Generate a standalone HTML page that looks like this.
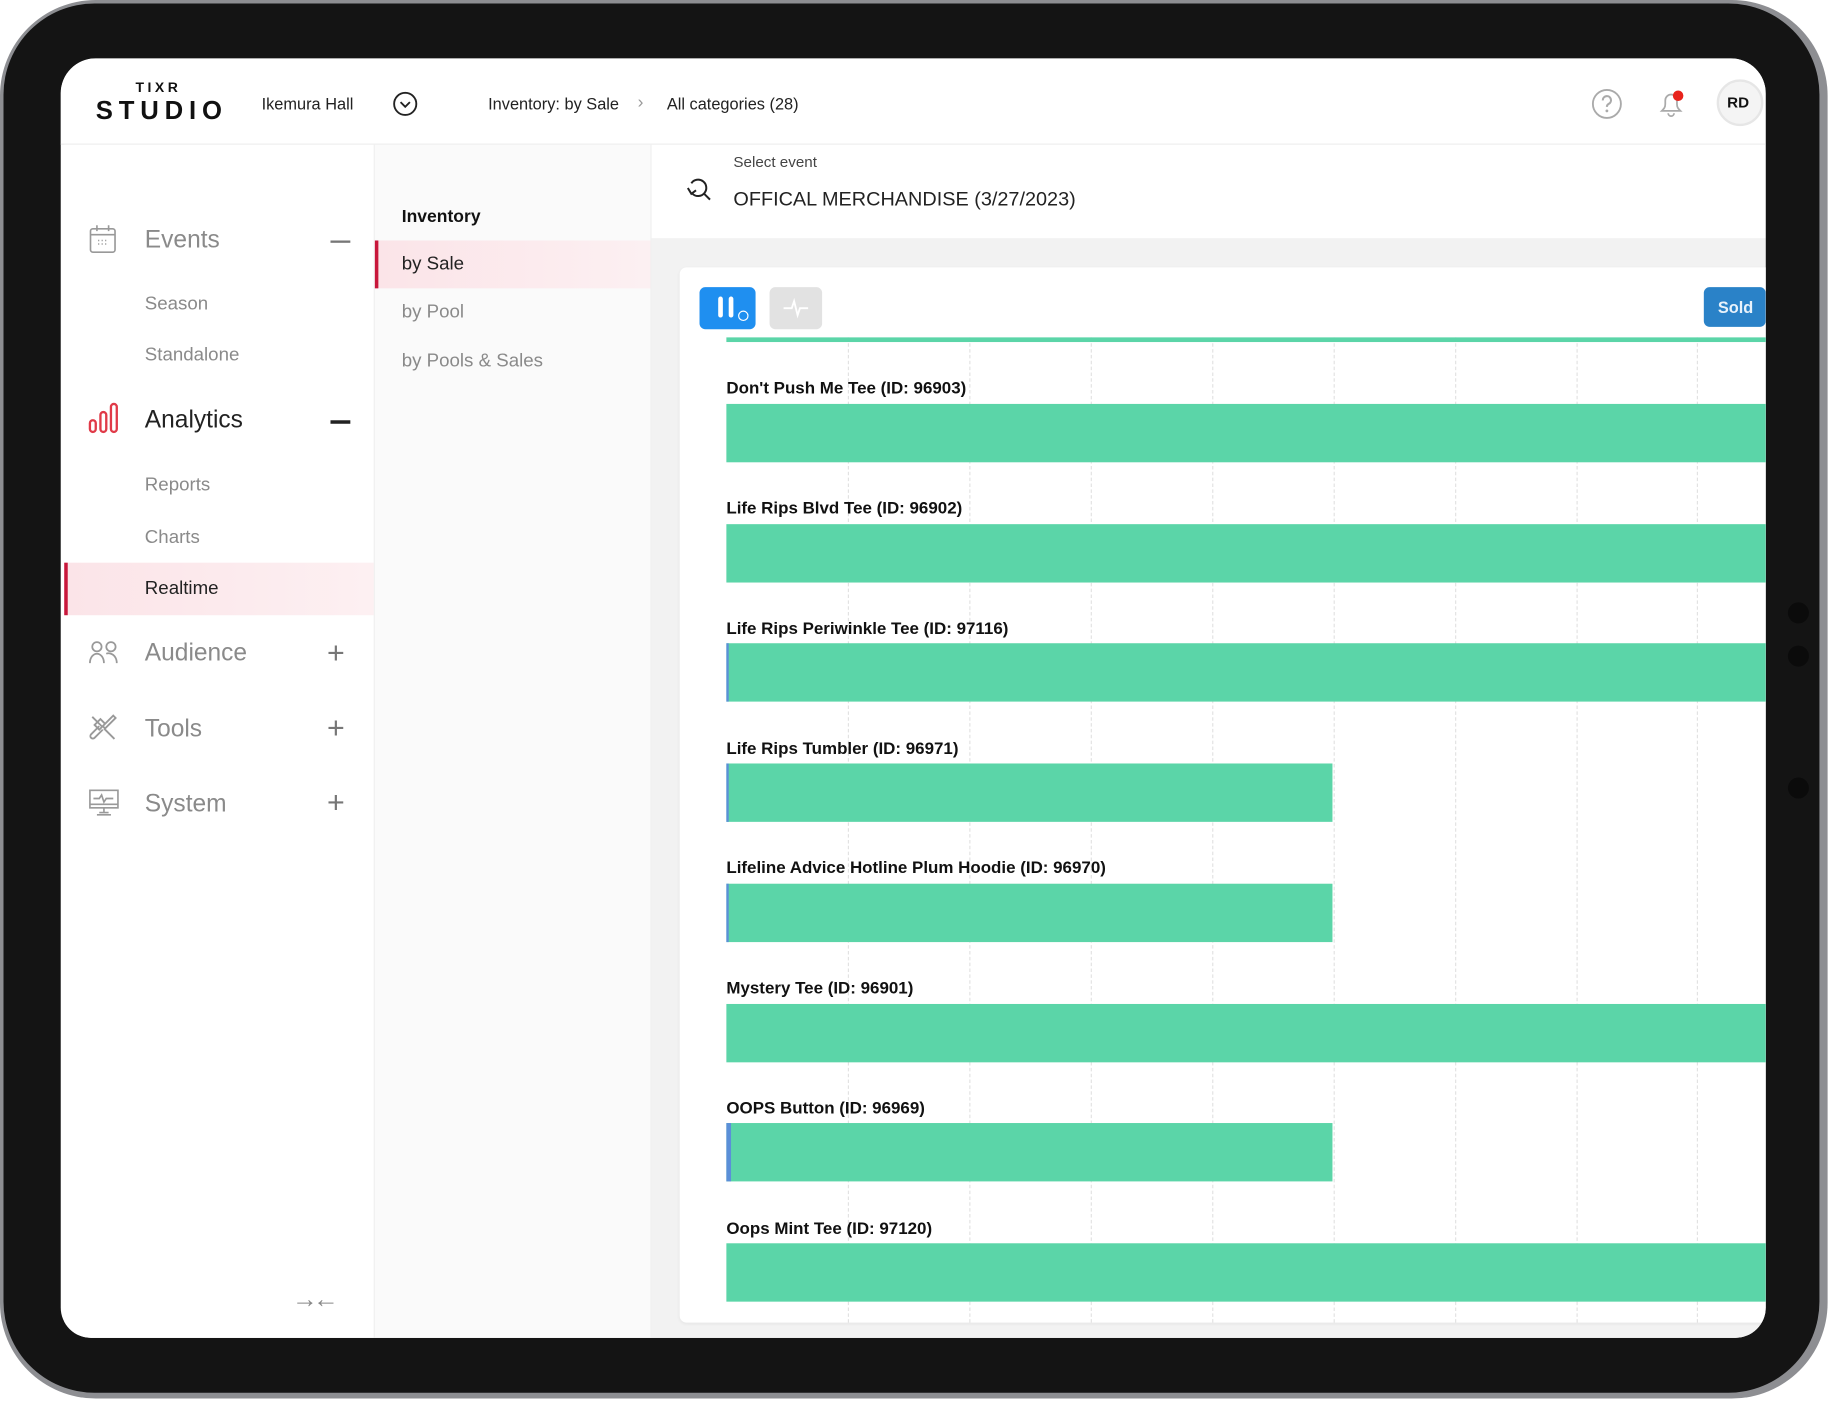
<!DOCTYPE html>
<html><head><meta charset="utf-8"><style>
html,body{margin:0;padding:0;width:1830px;height:1402px;overflow:hidden;background:#fff;font-family:"Liberation Sans",sans-serif}
#w{position:absolute;left:0;top:0;width:1567px;height:1201px;transform:scale(1.1678,1.1674);transform-origin:0 0}
.a{position:absolute}
.dev{left:0;top:0;width:1565px;height:1198px;border-radius:82px;background:#8d8e92}
.bez{left:3px;top:3px;width:1555px;height:1190px;border-radius:78px;background:#141414}
.scr{left:52px;top:50px;width:1460px;height:1096px;border-radius:30px 30px 26px 26px;background:#fff;overflow:hidden}
.t{position:absolute;white-space:nowrap}
.nav{font-size:21px;color:#8a8a8a}
.sub{font-size:16px;color:#8a8a8a}
.lbl{font-size:14.5px;font-weight:bold;color:#111;left:70px}
.bar{position:absolute;left:70px;height:50px;background:#5bd5a8}
.grid{position:absolute;top:60px;bottom:0;width:0;border-left:1px dashed #e2e2e2}
</style></head><body><div id="w">
<div class="a dev"></div><div class="a bez"></div>
<div class="a" style="left:1531px;top:516px;width:18px;height:18px;border-radius:9px;background:#0b0b0b"></div>
<div class="a" style="left:1531px;top:553px;width:18px;height:18px;border-radius:9px;background:#0b0b0b"></div>
<div class="a" style="left:1531px;top:666px;width:18px;height:18px;border-radius:9px;background:#0b0b0b"></div>
<div class="a scr">
 <!-- header -->
 <div class="a" style="left:0;top:0;width:1460px;height:73px;background:#fff;border-bottom:1px solid #ececec"></div>
 <div class="t" style="left:64px;top:18px;font-size:12px;letter-spacing:3px;font-weight:bold;color:#111">TIXR</div>
 <div class="t" style="left:30px;top:32px;font-size:22px;letter-spacing:5px;font-weight:bold;color:#111">STUDIO</div>
 <div class="t" style="left:172px;top:31px;font-size:14px;color:#222">Ikemura Hall</div>
 <svg class="a" style="left:284px;top:28px" width="22" height="22" viewBox="0 0 22 22"><circle cx="11" cy="11" r="9.5" fill="none" stroke="#222" stroke-width="1.6"/><path d="M7 9.5l4 4 4-4" fill="none" stroke="#222" stroke-width="1.6"/></svg>
 <div class="t" style="left:366px;top:31px;font-size:14px;color:#222">Inventory: by Sale</div>
 <div class="t" style="left:494px;top:29px;font-size:15px;color:#999">›</div>
 <div class="t" style="left:519px;top:31px;font-size:14px;color:#222">All categories (28)</div>
 <svg class="a" style="left:1310px;top:25px" width="28" height="28" viewBox="0 0 28 28"><circle cx="14" cy="14" r="12" fill="none" stroke="#aaa" stroke-width="1.6"/><path d="M10.5 11a3.5 3.5 0 1 1 5 3c-1 .6-1.5 1.2-1.5 2.5" fill="none" stroke="#aaa" stroke-width="1.8"/><circle cx="14" cy="20" r="1.2" fill="#aaa"/></svg>
 <svg class="a" style="left:1364px;top:25px" width="30" height="28" viewBox="0 0 30 28"><path d="M7 20h16c-2-2-3-3-3-6v-3a5 5 0 0 0-10 0v3c0 3-1 4-3 6z" fill="none" stroke="#aaa" stroke-width="1.5"/><path d="M12.5 22a2.5 2.5 0 0 0 5 0" fill="none" stroke="#aaa" stroke-width="1.5"/><circle cx="21" cy="7" r="4.5" fill="#e8231c"/></svg>
 <div class="a" style="left:1418px;top:18px;width:36px;height:36px;border-radius:50%;background:#f4f4f4;border:2px solid #e6e6e6"></div>
 <div class="t" style="left:1427px;top:30px;font-size:13px;font-weight:bold;color:#111">RD</div>

 <!-- left sidebar -->
 <div class="a" style="left:3px;top:74px;width:265px;height:1030px;background:#fff;border-right:1px solid #eee"></div>
 <svg class="a" style="left:24px;top:142px" width="24" height="26" viewBox="0 0 24 26"><rect x="1.5" y="4" width="21" height="20" rx="2" fill="none" stroke="#999" stroke-width="1.4"/><path d="M1.5 9h21M7 1v5M17 1v5" stroke="#999" stroke-width="1.4"/><path d="M8 14h1M11 14h1M14 14h1M8 17h1M11 17h1M14 17h1" stroke="#999" stroke-width="1.3"/></svg>
 <div class="t nav" style="left:72px;top:144px">Events</div>
 <div class="a" style="left:231px;top:156px;width:17px;height:2px;background:#777"></div>
 <div class="t sub" style="left:72px;top:202px">Season</div>
 <div class="t sub" style="left:72px;top:246px">Standalone</div>
 <svg class="a" style="left:23px;top:294px" width="28" height="28" viewBox="0 0 28 28"><g fill="none" stroke="#e03a48" stroke-width="2"><rect x="2" y="16" width="5" height="10" rx="2.5"/><rect x="11" y="9" width="5" height="17" rx="2.5"/><rect x="20" y="2" width="5" height="24" rx="2.5"/></g></svg>
 <div class="t" style="left:72px;top:298px;font-size:21px;color:#222">Analytics</div>
 <div class="a" style="left:231px;top:310px;width:17px;height:2.5px;background:#222"></div>
 <div class="t sub" style="left:72px;top:357px">Reports</div>
 <div class="t sub" style="left:72px;top:402px">Charts</div>
 <div class="a" style="left:3px;top:432px;width:265px;height:45px;background:linear-gradient(90deg,#fbe4e8,#fdf0f2)"></div>
 <div class="a" style="left:3px;top:432px;width:3px;height:45px;background:#c8173b"></div>
 <div class="t" style="left:72px;top:446px;font-size:16px;color:#222">Realtime</div>
 <svg class="a" style="left:24px;top:498px" width="28" height="22" viewBox="0 0 28 22"><g fill="none" stroke="#999" stroke-width="1.5"><circle cx="7" cy="6" r="4"/><circle cx="19" cy="6" r="4"/><path d="M1 20c0-5 3-8 6-8s6 3 6 8M15 12c1-.5 2.5-.5 4 0 3 1 5 4 5 8"/></g></svg>
 <div class="t nav" style="left:72px;top:498px">Audience</div>
 <div class="t" style="left:228px;top:494px;font-size:26px;color:#777">+</div>
 <svg class="a" style="left:24px;top:561px" width="26" height="26" viewBox="0 0 26 26"><g fill="none" stroke="#999" stroke-width="1.6"><path d="M3 3l8 8M5 10l5-5 4 4-5 5zM13 13l9 9M21 2l2 2-9 9-2-2zM12 14l-7 7a2 2 0 0 1-3-3l7-7"/></g></svg>
 <div class="t nav" style="left:72px;top:563px">Tools</div>
 <div class="t" style="left:228px;top:558px;font-size:26px;color:#777">+</div>
 <svg class="a" style="left:24px;top:626px" width="26" height="24" viewBox="0 0 26 24"><g fill="none" stroke="#999" stroke-width="1.4"><rect x="1" y="1" width="24" height="15"/><path d="M1 13h24M9 20h8M7 22h12M13 16v4M4 8h5l2-3 2 6 2-3h6"/></g></svg>
 <div class="t nav" style="left:72px;top:627px">System</div>
 <div class="t" style="left:228px;top:622px;font-size:26px;color:#777">+</div>
 <div class="t" style="left:198px;top:1050px;font-size:22px;color:#888;letter-spacing:-4px">→←</div>

 <!-- second column -->
 <div class="a" style="left:269px;top:74px;width:236px;height:1030px;background:#fafafa;border-right:1px solid #eee"></div>
 <div class="t" style="left:292px;top:127px;font-size:15px;font-weight:bold;color:#111">Inventory</div>
 <div class="a" style="left:269px;top:156px;width:236px;height:41px;background:linear-gradient(90deg,#fbe4e8,#fcf0f2)"></div>
 <div class="a" style="left:269px;top:156px;width:3px;height:41px;background:#c8173b"></div>
 <div class="t" style="left:292px;top:168px;font-size:16px;color:#222">by Sale</div>
 <div class="t" style="left:292px;top:209px;font-size:16px;color:#8a8a8a">by Pool</div>
 <div class="t" style="left:292px;top:251px;font-size:16px;color:#8a8a8a">by Pools &amp; Sales</div>

 <!-- main -->
 <div class="a" style="left:506px;top:74px;width:954px;height:80px;background:#fff"></div>
 <div class="a" style="left:506px;top:154px;width:954px;height:950px;background:#f2f2f2"></div>
 <svg class="a" style="left:536px;top:101px" width="22" height="22" viewBox="0 0 22 22"><g fill="none" stroke="#222" stroke-width="1.7"><path d="M4 6a7 7 0 1 1 1 9"/><path d="M1 10l3 5 4-3"/><path d="M15 15l5 5"/></g></svg>
 <div class="t" style="left:576px;top:81px;font-size:13px;color:#444">Select event</div>
 <div class="t" style="left:576px;top:111px;font-size:17px;color:#222">OFFICAL MERCHANDISE (3/27/2023)</div>

 <div class="a" style="left:530px;top:179px;width:940px;height:904px;background:#fff;border-radius:6px;box-shadow:0 1px 3px rgba(0,0,0,.06)">
  <div class="grid" style="left:144px"></div><div class="grid" style="left:248px"></div><div class="grid" style="left:352px"></div><div class="grid" style="left:456px"></div><div class="grid" style="left:560px"></div><div class="grid" style="left:664px"></div><div class="grid" style="left:768px"></div><div class="grid" style="left:871px"></div>
  <div class="a" style="left:17px;top:17px;width:48px;height:36px;border-radius:5px;background:#1f8ff0"></div>
  <div class="a" style="left:33px;top:25px;width:4px;height:18px;background:#fff;border-radius:2px"></div>
  <div class="a" style="left:42px;top:25px;width:4px;height:18px;background:#fff;border-radius:2px"></div>
  <div class="a" style="left:50px;top:37px;width:7px;height:7px;border:1.5px solid #fff;border-radius:50%"></div>
  <div class="a" style="left:77px;top:17px;width:45px;height:36px;border-radius:5px;background:#e2e2e2"></div>
  <svg class="a" style="left:88px;top:25px" width="24" height="20" viewBox="0 0 24 20"><path d="M1 10h7l2-6 3 12 2-6h7" fill="none" stroke="#fff" stroke-width="1.6"/></svg>
  <div class="a" style="left:877px;top:17px;width:53px;height:34px;border-radius:5px;background:#2a82c8"></div>
  <div class="t" style="left:889px;top:26px;font-size:14px;font-weight:bold;color:#e8f2fb">Sold</div>
  <div class="a" style="left:40px;top:60px;width:900px;height:4px;background:#5bd5a8"></div>

  <div class="t lbl" style="left:40px;top:96px">Don't Push Me Tee (ID: 96903)</div>
  <div class="bar" style="left:40px;top:117px;width:900px"></div>
  <div class="t lbl" style="left:40px;top:199px">Life Rips Blvd Tee (ID: 96902)</div>
  <div class="bar" style="left:40px;top:220px;width:900px"></div>
  <div class="t lbl" style="left:40px;top:302px">Life Rips Periwinkle Tee (ID: 97116)</div>
  <div class="bar" style="left:40px;top:322px;width:900px;border-left:2px solid #5b8fd8"></div>
  <div class="t lbl" style="left:40px;top:405px">Life Rips Tumbler (ID: 96971)</div>
  <div class="bar" style="left:40px;top:425px;width:517px;border-left:2px solid #5b8fd8"></div>
  <div class="t lbl" style="left:40px;top:507px">Lifeline Advice Hotline Plum Hoodie (ID: 96970)</div>
  <div class="bar" style="left:40px;top:528px;width:517px;border-left:2px solid #5b8fd8"></div>
  <div class="t lbl" style="left:40px;top:610px">Mystery Tee (ID: 96901)</div>
  <div class="bar" style="left:40px;top:631px;width:900px"></div>
  <div class="t lbl" style="left:40px;top:713px">OOPS Button (ID: 96969)</div>
  <div class="bar" style="left:40px;top:733px;width:515px;border-left:4px solid #5b8fd8"></div>
  <div class="t lbl" style="left:40px;top:816px">Oops Mint Tee (ID: 97120)</div>
  <div class="bar" style="left:40px;top:836px;width:900px"></div>
 </div>
</div>
</div></body></html>
